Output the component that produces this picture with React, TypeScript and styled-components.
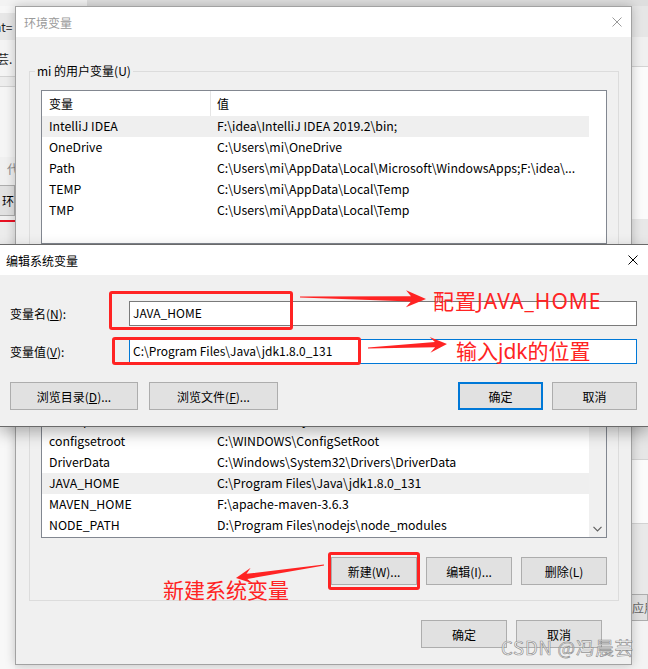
import React from "react";
import styled, { createGlobalStyle } from "styled-components";

const UI_FONT = `"Noto Sans CJK SC", "Noto Sans", sans-serif`;
const NOTE_FONT = `"Noto Sans", "Noto Sans CJK SC", sans-serif`;
const RED = "#ff2323";

const GlobalStyle = createGlobalStyle`
  html, body { margin: 0; padding: 0; width: 648px; height: 669px; overflow: hidden; background: #f4f4f4; }
  body { font-family: ${UI_FONT}; font-size: 12px; color: #000; }
  * { box-sizing: border-box; }
`;

const Desktop = styled.div`
  position: relative;
  width: 648px;
  height: 669px;
  overflow: hidden;
  background: #f4f4f4;
`;

/* ---------- background window (only edges visible) ---------- */
const BackWindow = styled.div`
  position: absolute;
  inset: 0;
  display: flex;
  flex-direction: column;
`;
const BackTop = styled.div`
  height: 6px;
  flex: none;
  display: flex;
`;
const BackTopPart = styled.div<{ $w?: number; $bg: string }>`
  ${(p) => (p.$w ? `width: ${p.$w}px;` : "flex: 1;")}
  background: ${(p) => p.$bg};
`;
const BackMiddle = styled.div`
  flex: 1;
  display: flex;
  justify-content: space-between;
`;
const Strip = styled.div<{ $w: number }>`
  width: ${(p) => p.$w}px;
  display: flex;
  flex-direction: column;
  overflow: hidden;
`;
const StripBlock = styled.div<{ $h?: number; $bg: string; $line?: boolean }>`
  ${(p) => (p.$h ? `height: ${p.$h}px; flex: none;` : "flex: 1;")}
  background: ${(p) => p.$bg};
  ${(p) => (p.$line ? "border-bottom: 1px solid #d3d3d3;" : "")}
  display: flex;
  align-items: center;
  overflow: hidden;
  white-space: nowrap;
  color: #333;
  font-size: 12px;
`;
const StripText = styled.span<{ $shift?: number; $color?: string }>`
  margin-left: ${(p) => p.$shift ?? 0}px;
  color: ${(p) => p.$color ?? "#222"};
`;
const StripButton = styled.div<{ $h: number }>`
  height: ${(p) => p.$h}px;
  flex: none;
  background: #e1e1e1;
  border: 1px solid #adadad;
  border-left: none;
  display: flex;
  align-items: center;
  padding-left: 2px;
  overflow: hidden;
  white-space: nowrap;
`;
const StripRedLine = styled.div`
  height: 2px;
  flex: none;
  background: #e81123;
`;

/* ---------- window chrome ---------- */
const MainWindow = styled.section`
  position: absolute;
  left: 15px;
  top: 6px;
  width: 617px;
  height: 659px;
  border: 1px solid #a2a2a2;
  background: #f0f0f0;
  box-shadow: 0 0 10px rgba(0, 0, 0, 0.22);
  display: flex;
  flex-direction: column;
`;
const EditDialog = styled.section`
  position: absolute;
  left: -1px;
  top: 244px;
  width: 650px;
  border: 1px solid #6a6a6a;
  background: #f0f0f0;
  box-shadow: 0 6px 14px rgba(0, 0, 0, 0.28);
  display: flex;
  flex-direction: column;
`;
const TitleBar = styled.header<{ $active?: boolean; $pl: number; $pr: number }>`
  height: 30px;
  flex: none;
  background: #fff;
  display: flex;
  align-items: center;
  justify-content: space-between;
  padding: 0 ${(p) => p.$pr}px 0 ${(p) => p.$pl}px;
  color: ${(p) => (p.$active ? "#000" : "#9a9a9a")};
  font-size: 12px;
`;
const CloseIcon = ({ color }: { color: string }) => (
  <svg width="10" height="10" viewBox="0 0 10 10">
    <path d="M0.5 0.5 L9.5 9.5 M9.5 0.5 L0.5 9.5" stroke={color} strokeWidth="1" />
  </svg>
);

const MainBody = styled.div`
  flex: 1;
  display: flex;
  flex-direction: column;
  padding: 0 12px 0 13px;
`;

const Group = styled.fieldset<{ $mt: number }>`
  margin: ${(p) => p.$mt}px 0 0 0;
  padding: 11px 11px 15px 11px;
  border: 1px solid #dcdcdc;
  min-width: 0;
`;
const GroupLegend = styled.legend`
  padding: 0 2px;
  margin-left: -6px;
  line-height: 16px;
  font-size: 12px;
  color: #000;
`;

const ListBox = styled.div`
  height: 154px;
  border: 1px solid #828790;
  background: #fff;
  display: flex;
  overflow: hidden;
`;
const ListTable = styled.div`
  width: 547px;
  flex: none;
  display: flex;
  flex-direction: column;
  overflow: hidden;
`;
const ScrollTrack = styled.div<{ $visible?: boolean }>`
  flex: 1;
  background: ${(p) => (p.$visible ? "#f0f0f0" : "#fff")};
  display: flex;
  flex-direction: column;
  justify-content: flex-end;
  align-items: center;
  padding-bottom: 5px;
`;
const HeaderRow = styled.div`
  height: 25px;
  flex: none;
  display: grid;
  grid-template-columns: 168px 1fr;
  align-items: stretch;
`;
const HeaderCell = styled.div<{ $sep?: boolean }>`
  display: flex;
  align-items: center;
  padding-left: ${(p) => (p.$sep ? 6 : 7)}px;
  ${(p) => (p.$sep ? "border-left: 1px solid #e5e5e5;" : "")}
  color: #000;
`;
const DataRow = styled.div<{ $selected?: boolean }>`
  height: 21px;
  flex: none;
  display: grid;
  grid-template-columns: 168px 1fr;
  line-height: 21px;
  background: ${(p) => (p.$selected ? "#efefef" : "transparent")};
`;
const DataCell = styled.div`
  padding-left: 7px;
  white-space: nowrap;
  overflow: hidden;
  color: #000;
  font-size: 12.3px;
`;

const ButtonRow = styled.div<{ $mt: number; $mr?: number; $gap: number }>`
  margin-top: ${(p) => p.$mt}px;
  margin-right: ${(p) => p.$mr ?? 0}px;
  display: flex;
  justify-content: flex-end;
  gap: ${(p) => p.$gap}px;
`;
const WinButton = styled.div<{ $w: number; $default?: boolean }>`
  width: ${(p) => p.$w}px;
  height: 28px;
  flex: none;
  background: #e1e1e1;
  border: ${(p) => (p.$default ? "2px solid #0078d7" : "1px solid #adadad")};
  display: flex;
  align-items: center;
  justify-content: center;
  color: #000;
  font-size: 12px;
  white-space: nowrap;
`;

/* ---------- dialog body ---------- */
const DialogBody = styled.div`
  display: flex;
  flex-direction: column;
  padding: 26px 11px 16px 10px;
`;
const FieldRow = styled.div<{ $mt?: number }>`
  margin-top: ${(p) => p.$mt ?? 0}px;
  height: 25px;
  display: flex;
  align-items: center;
`;
const FieldLabel = styled.div`
  width: 119px;
  flex: none;
  color: #000;
`;
const TextInput = styled.div<{ $focused?: boolean }>`
  flex: 1;
  height: 25px;
  background: #fff;
  border: 1px solid ${(p) => (p.$focused ? "#0078d7" : "#7a7a7a")};
  padding-left: 3px;
  line-height: 22px;
  white-space: nowrap;
  overflow: hidden;
`;
const DialogButtons = styled.div`
  margin-top: 18px;
  display: flex;
  justify-content: space-between;
`;
const ButtonGroup = styled.div<{ $gap: number }>`
  display: flex;
  gap: ${(p) => p.$gap}px;
`;

/* ---------- annotations ---------- */
const RedBox = styled.div<{ $x: number; $y: number; $w: number; $h: number }>`
  position: absolute;
  left: ${(p) => p.$x}px;
  top: ${(p) => p.$y}px;
  width: ${(p) => p.$w}px;
  height: ${(p) => p.$h}px;
  border: 3px solid ${RED};
  border-radius: 3px;
  pointer-events: none;
`;
const RedNote = styled.div<{ $x: number; $y: number; $spacing?: number }>`
  position: absolute;
  left: ${(p) => p.$x}px;
  top: ${(p) => p.$y}px;
  font-family: ${NOTE_FONT};
  font-size: 21px;
  line-height: 21px;
  letter-spacing: ${(p) => p.$spacing ?? 0}px;
  color: ${RED};
  white-space: nowrap;
`;
const ArrowLayer = styled.svg`
  position: absolute;
  left: 0;
  top: 0;
  width: 648px;
  height: 669px;
  pointer-events: none;
`;
const Watermark = styled.div`
  position: absolute;
  left: 501px;
  top: 636px;
  font-size: 18.5px;
  line-height: 22px;
  color: rgba(255, 255, 255, 0.8);
  -webkit-text-stroke: 0.7px rgba(110, 110, 110, 0.75);
  white-space: nowrap;
  letter-spacing: 0.8px;
`;

function arrowPoints(x1: number, y1: number, x2: number, y2: number, head = 18, barb = 8) {
  const dx = x2 - x1;
  const dy = y2 - y1;
  const len = Math.hypot(dx, dy);
  const ux = dx / len;
  const uy = dy / len;
  const nx = -uy;
  const ny = ux;
  const bx = x2 - ux * head;
  const by = y2 - uy * head;
  const jx = x2 - ux * (head - 5);
  const jy = y2 - uy * (head - 5);
  const pts: [number, number][] = [
    [x1 + nx * 0.6, y1 + ny * 0.6],
    [jx + nx * 2.6, jy + ny * 2.6],
    [bx + nx * barb, by + ny * barb],
    [x2, y2],
    [bx - nx * barb, by - ny * barb],
    [jx - nx * 2.6, jy - ny * 2.6],
    [x1 - nx * 0.6, y1 - ny * 0.6],
  ];
  return pts.map(([a, b]) => `${a.toFixed(1)},${b.toFixed(1)}`).join(" ");
}

const Chevron = () => (
  <svg width="9" height="6" viewBox="0 0 9 6">
    <path d="M0.5 0.8 L4.5 4.8 L8.5 0.8" stroke="#606060" strokeWidth="1.2" fill="none" />
  </svg>
);

type Row = [string, string];
const userVars: Row[] = [
  ["IntelliJ IDEA", "F:\\idea\\IntelliJ IDEA 2019.2\\bin;"],
  ["OneDrive", "C:\\Users\\mi\\OneDrive"],
  ["Path", "C:\\Users\\mi\\AppData\\Local\\Microsoft\\WindowsApps;F:\\idea\\..."],
  ["TEMP", "C:\\Users\\mi\\AppData\\Local\\Temp"],
  ["TMP", "C:\\Users\\mi\\AppData\\Local\\Temp"],
];
const sysVars: Row[] = [
  ["ComSpec", "C:\\WINDOWS\\system32\\cmd.exe"],
  ["configsetroot", "C:\\WINDOWS\\ConfigSetRoot"],
  ["DriverData", "C:\\Windows\\System32\\Drivers\\DriverData"],
  ["JAVA_HOME", "C:\\Program Files\\Java\\jdk1.8.0_131"],
  ["MAVEN_HOME", "F:\\apache-maven-3.6.3"],
  ["NODE_PATH", "D:\\Program Files\\nodejs\\node_modules"],
  ["NUMBER_OF_PROCESSORS", "8"],
];

function VarList({ rows, selected, scroll }: { rows: Row[]; selected: number; scroll?: boolean }) {
  return (
    <ListBox>
      <ListTable>
        <HeaderRow>
          <HeaderCell>变量</HeaderCell>
          <HeaderCell $sep>值</HeaderCell>
        </HeaderRow>
        {rows.map(([k, v], i) => (
          <DataRow key={k} $selected={i === selected}>
            <DataCell>{k}</DataCell>
            <DataCell>{v}</DataCell>
          </DataRow>
        ))}
      </ListTable>
      <ScrollTrack $visible={scroll}>{scroll && <Chevron />}</ScrollTrack>
    </ListBox>
  );
}

export default function App() {
  return (
    <Desktop>
      <GlobalStyle />
      <BackWindow>
        <BackTop>
          <BackTopPart $w={87} $bg="#f3f3f3" />
          <BackTopPart $bg="#dedede" />
        </BackTop>
        <BackMiddle>
          <Strip $w={15}>
            <StripBlock $h={7} $bg="#f7f7f7" />
            <StripBlock $h={27} $bg="#e7e7e7">
              <StripText $shift={-6}>nt=</StripText>
            </StripBlock>
            <StripBlock $h={37} $bg="#f4f4f4" $line>
              <StripText $shift={-3}>芸.</StripText>
            </StripBlock>
            <StripBlock $h={10} $bg="#ededed" $line />
            <StripBlock $h={70} $bg="#f5f5f5" />
            <StripBlock $h={22} $bg="#f0f0f0">
              <StripText $shift={7} $color="#8a8a8a">代</StripText>
            </StripBlock>
            <StripBlock $h={6} $bg="#f0f0f0" />
            <StripButton $h={31}>环境</StripButton>
            <StripBlock $h={4} $bg="#f0f0f0" />
            <StripRedLine />
            <StripBlock $h={200} $bg="#ececec" />
            <StripBlock $bg="#f8f8f8" />
          </Strip>
          <Strip $w={16}>
            <StripBlock $h={31} $bg="#e6e6e6" />
            <StripBlock $h={30} $bg="#f0f0f0" $line />
            <StripBlock $h={152} $bg="#fbfbfb" />
            <StripBlock $h={208} $bg="#e8e8e8" />
            <StripBlock $h={33} $bg="#e6e6e6" $line />
            <StripBlock $h={64} $bg="#fbfbfb" $line />
            <StripBlock $h={70} $bg="#e9e9e9" />
            <StripButton $h={27}>
              <StripText $shift={-2} $color="#666">应用</StripText>
            </StripButton>
            <StripBlock $bg="#f3f3f3" />
          </Strip>
        </BackMiddle>
      </BackWindow>

      <MainWindow>
        <TitleBar $pl={8} $pr={9}>
          <span>环境变量</span>
          <CloseIcon color="#9a9a9a" />
        </TitleBar>
        <MainBody>
          <Group $mt={26}>
            <GroupLegend>mi 的用户变量(U)</GroupLegend>
            <VarList rows={userVars} selected={0} />
            <ButtonRow $mt={19} $gap={9}>
              <WinButton $w={86}>新建(N)...</WinButton>
              <WinButton $w={86}>编辑(E)...</WinButton>
              <WinButton $w={86}>删除(D)</WinButton>
            </ButtonRow>
          </Group>
          <Group $mt={50}>
            <GroupLegend>系统变量(S)</GroupLegend>
            <VarList rows={sysVars} selected={3} scroll />
            <ButtonRow $mt={19} $gap={9}>
              <WinButton $w={86}>新建(W)...</WinButton>
              <WinButton $w={86}>编辑(I)...</WinButton>
              <WinButton $w={86}>删除(L)</WinButton>
            </ButtonRow>
          </Group>
          <ButtonRow $mt={19} $mr={17} $gap={9}>
            <WinButton $w={86}>确定</WinButton>
            <WinButton $w={86}>取消</WinButton>
          </ButtonRow>
        </MainBody>
      </MainWindow>

      <EditDialog>
        <TitleBar $active $pl={6} $pr={10}>
          <span>编辑系统变量</span>
          <CloseIcon color="#000" />
        </TitleBar>
        <DialogBody>
          <FieldRow>
            <FieldLabel>
              变量名(<u>N</u>):
            </FieldLabel>
            <TextInput>JAVA_HOME</TextInput>
          </FieldRow>
          <FieldRow $mt={13}>
            <FieldLabel>
              变量值(<u>V</u>):
            </FieldLabel>
            <TextInput $focused>C:\Program Files\Java\jdk1.8.0_131</TextInput>
          </FieldRow>
          <DialogButtons>
            <ButtonGroup $gap={11}>
              <WinButton $w={128}>
                浏览目录(<u>D</u>)...
              </WinButton>
              <WinButton $w={129}>
                浏览文件(<u>F</u>)...
              </WinButton>
            </ButtonGroup>
            <ButtonGroup $gap={9}>
              <WinButton $w={85} $default>
                确定
              </WinButton>
              <WinButton $w={85}>取消</WinButton>
            </ButtonGroup>
          </DialogButtons>
        </DialogBody>
      </EditDialog>

      <RedBox $x={109} $y={291} $w={184} $h={39} />
      <RedBox $x={112} $y={337} $w={249} $h={28} />
      <RedBox $x={328} $y={552} $w={92} $h={38} />
      <ArrowLayer viewBox="0 0 648 669">
        <polygon points={arrowPoints(300, 297, 426, 299, 20, 8.5)} fill={RED} />
        <polygon points={arrowPoints(368, 348, 447, 344, 17, 8)} fill={RED} />
        <polygon points={arrowPoints(324, 565, 236, 578, 16, 8)} fill={RED} />
      </ArrowLayer>
      <RedNote $x={433} $y={291} $spacing={1}>
        配置JAVA_HOME
      </RedNote>
      <RedNote $x={456} $y={341}>输入jdk的位置</RedNote>
      <RedNote $x={163} $y={580}>新建系统变量</RedNote>
      <Watermark>CSDN @冯晨芸</Watermark>
    </Desktop>
  );
}
